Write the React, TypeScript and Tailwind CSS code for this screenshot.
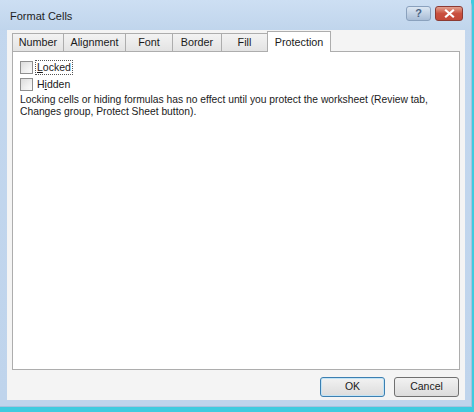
import React from 'react';

const font = { fontFamily: '"Liberation Sans", Arial, sans-serif' };

const tabs = [
  { label: 'Number', w: 'w-[51px]' },
  { label: 'Alignment', w: 'w-[62px]' },
  { label: 'Font', w: 'w-[47px]' },
  { label: 'Border', w: 'w-[49px]' },
  { label: 'Fill', w: 'w-[46px]' },
];

const Checkbox = ({ label, focus }: { label: React.ReactNode; focus?: boolean }) => (
  <div className="flex items-center h-[17px]">
    <div className="w-[13px] h-[13px] border border-[#8f8f8f] bg-gradient-to-br from-[#dcdcdc] to-[#fbfbfb] p-[2px]">
      <div className="w-full h-full bg-gradient-to-br from-[#e2e2e2] to-[#f8f8f8]" />
    </div>
    <span
      className={`ml-[2px] px-[1px] leading-[13px] border border-dotted ${focus ? 'border-[#555]' : 'border-transparent'}`}
    >
      {label}
    </span>
  </div>
);

export default function App() {
  return (
    <div className="w-[474px] h-[412px] bg-[#3fcbdf] text-[#1a1a1a] text-[10.5px]" style={font}>
      <div className="w-[472px] h-[407px] bg-gradient-to-b from-[#c3d7ee] to-[#bfd4ec] rounded-tr-[6px] flex flex-col border-r border-b border-[#a8c2de]">
        {/* title bar */}
        <div className="h-[30px] flex items-center pl-[10px] pr-[8px] bg-gradient-to-b from-[#cddff3] to-[#c0d5ec]">
          <span className="text-[11px] text-[#1e1e1e] mt-[2px]">Format Cells</span>
          <div className="ml-auto flex items-center gap-[4px] mt-[-3px]">
            <div className="w-[25px] h-[15px] rounded-[3px] border border-[#8aa1bd] bg-gradient-to-b from-[#dce7f3] to-[#a9bdd6] flex items-center justify-center text-[11px] leading-none text-[#4a6383] font-bold">
              ?
            </div>
            <div className="w-[28px] h-[15px] rounded-[3px] border border-[#8c3a33] bg-gradient-to-b from-[#e2a08f] via-[#c9503f] to-[#c34838] flex items-center justify-center">
              <svg width="11" height="9" viewBox="0 0 11 9">
                <path d="M2 1.5 L9 7.5 M9 1.5 L2 7.5" stroke="#fff" strokeWidth="2.2" strokeLinecap="square" />
              </svg>
            </div>
          </div>
        </div>
        {/* body */}
        <div className="flex-1 ml-[7px] mr-[6px] mb-[6px] bg-[#f4f4f4] flex flex-col px-[5px]">
          {/* tabs */}
          <div className="flex items-end h-[21px]">
            {tabs.map((t) => (
              <div
                key={t.label}
                className={`${t.w} h-[18px] border border-b-0 border-r-0 border-[#adadad] bg-gradient-to-b from-[#f3f3f3] to-[#e3e3e3] flex items-center justify-center text-[10.8px]`}
              >
                {t.label}
              </div>
            ))}
            <div className="w-[64px] h-[21px] border border-b-0 border-[#adadad] bg-white flex items-center justify-center relative top-[1px] z-10 text-[10.8px]">
              Protection
            </div>
          </div>
          {/* panel */}
          <div className="h-[319px] w-[448px] bg-white border border-[#adadad] px-[7px] pt-[7px]">
            <Checkbox
              focus
              label={
                <>
                  <span className="underline">L</span>ocked
                </>
              }
            />
            <Checkbox
              label={
                <>
                  H<span className="underline">i</span>dden
                </>
              }
            />
            <p className="mt-[1px] leading-[12px] text-[10.3px]">
              Locking cells or hiding formulas has no effect until you protect the worksheet (Review tab,
              <br />
              Changes group, Protect Sheet button).
            </p>
          </div>
          {/* buttons */}
          <div className="flex justify-end gap-[9px] mt-[7px] pr-[1px]">
            <div className="w-[65px] h-[20px] rounded-[3px] border border-[#3c7fb1] shadow-[inset_0_0_0_1px_#c2e4f6] bg-gradient-to-b from-[#f2f2f2] to-[#dcdcdc] flex items-center justify-center">
              OK
            </div>
            <div className="w-[65px] h-[20px] rounded-[3px] border border-[#707070] bg-gradient-to-b from-[#f2f2f2] to-[#dcdcdc] flex items-center justify-center">
              Cancel
            </div>
          </div>
        </div>
      </div>
    </div>
  );
}
